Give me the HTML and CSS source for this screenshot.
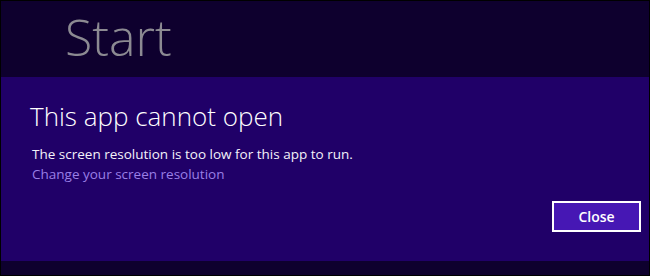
FILE: index.html
```html
<!DOCTYPE html>
<html lang="en">
<head>
    <meta charset="UTF-8">
    <meta name="viewport" content="width=device-width, initial-scale=1.0">
    <title>This app cannot open</title>
    <link rel="stylesheet" href="styles.css">
</head>

<body>
    <div class="schermo">
        <div class="intestazione">
            <h1 class="titolo-start">Start</h1>
        </div>
        <div class="dialogo">
            <h2 class="dialogo-titolo">This app cannot open</h2>
            <p class="dialogo-testo">The screen resolution is too low for this app to run.</p>
            <a class="dialogo-link" href="#">Change your screen resolution</a>
            <div class="pulsantiera">
                <button class="pulsante">Close</button>
            </div>
        </div>
        <div class="piede"></div>
    </div>
</body>
</html>
```

FILE: styles.css
```css
body {
    margin: 0;
    background-color: #000000;
    font-family: "Open Sans", "Noto Sans", sans-serif;
}

.schermo {
    width: 648px;
    height: 274px;
    border: 1px solid #000000;
    background-color: #0e002e;
    display: flex;
    flex-direction: column;
}

.intestazione {
    height: 76px;
    padding-left: 64px;
}

.titolo-start {
    margin: 0;
    font-size: 50px;
    font-weight: 300;
    color: #8c8a92;
    line-height: 72px;
}

.dialogo {
    height: 184px;
    background-color: #200068;
    padding: 0 0 0 29px;
    box-sizing: border-box;
    display: flex;
    flex-direction: column;
}

.dialogo-titolo {
    margin: 22px 0 0 0;
    font-size: 26px;
    font-weight: 300;
    color: #ffffff;
    line-height: 34px;
}

.dialogo-testo {
    margin: 12px 0 0 2px;
    font-size: 13.5px;
    color: #f4f2fa;
    line-height: 19px;
}

.dialogo-link {
    margin: 1px 0 0 2px;
    font-size: 13.5px;
    color: #9a7fe6;
    line-height: 19px;
    text-decoration: none;
}

.pulsantiera {
    display: flex;
    justify-content: flex-end;
    padding-right: 8px;
    margin-top: 17px;
}

.pulsante {
    width: 89px;
    height: 31px;
    border: 2px solid #ffffff;
    background-color: #4617b4;
    color: #ffffff;
    font-family: "Open Sans", "Noto Sans", sans-serif;
    font-size: 14px;
    font-weight: 600;
}

.piede {
    flex: 1;
}
```
